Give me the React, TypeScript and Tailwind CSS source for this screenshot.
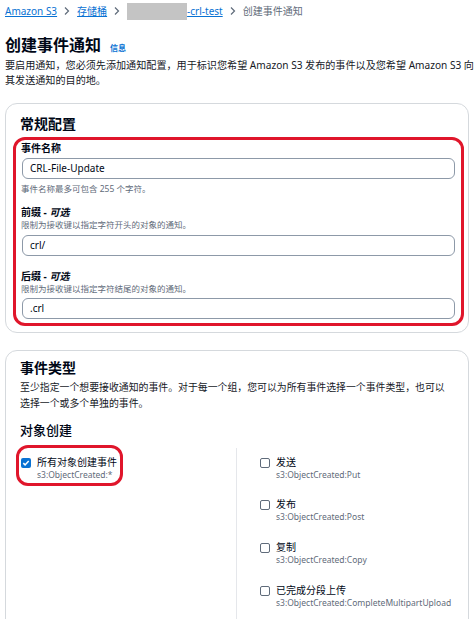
import React from "react";

const font = { fontFamily: '"Noto Sans", "Noto Sans CJK SC", sans-serif' };

function Chevron() {
  return (
    <svg width="8" height="10" viewBox="0 0 8 10" className="mx-[6px]">
      <path d="M2 1.5l3.5 3.5L2 8.5" fill="none" stroke="#5f6b7a" strokeWidth="1.2" />
    </svg>
  );
}

function Input({ value }: { value: string }) {
  return (
    <div className="ml-[3px] mr-[6px] h-[21px] rounded-[6px] border border-[#8d99a8] flex items-center pl-[7px] text-[10px] text-[#000716]">
      {value}
    </div>
  );
}

function Check({ label, code, checked }: { label: string; code: string; checked?: boolean }) {
  return (
    <div className="flex items-start gap-[6px]">
      {checked ? (
        <div className="mt-[2px] w-[10px] h-[10px] shrink-0 rounded-[2px] bg-[#0972d3] flex items-center justify-center">
          <svg width="8" height="8" viewBox="0 0 8 8">
            <path d="M1.3 4.1l1.8 1.8L6.7 2" fill="none" stroke="#fff" strokeWidth="1.5" />
          </svg>
        </div>
      ) : (
        <div className="mt-[2px] w-[10px] h-[10px] shrink-0 rounded-[2px] border border-[#5f6b7a] bg-white" />
      )}
      <div className="flex flex-col">
        <div className="text-[10px] text-[#000716] leading-[13px] whitespace-nowrap">{label}</div>
        <div className="text-[8.5px] text-[#5f6b7a] leading-[12px] whitespace-nowrap">{code}</div>
      </div>
    </div>
  );
}

export default function App() {
  return (
    <div style={font} className="w-[474px] h-[619px] overflow-hidden bg-white text-[#000716]">
      <div className="flex items-center h-[22px] pl-[5px] text-[10px]">
        <span className="text-[#0972d3] underline">Amazon S3</span>
        <Chevron />
        <span className="text-[#0972d3] underline">存储桶</span>
        <Chevron />
        <span className="inline-block w-[60px] h-[17px] bg-[#c4c4c4]" />
        <span className="text-[#0972d3] underline">-crl-test</span>
        <Chevron />
        <span className="text-[#5f6b7a]">创建事件通知</span>
      </div>
      <div className="flex items-baseline pl-[5px] mt-[12px] h-[22px]">
        <span className="text-[16px] font-bold leading-[22px]">创建事件通知</span>
        <span className="ml-[9px] text-[8px] font-bold text-[#0972d3]">信息</span>
      </div>
      <div className="px-[5px] mt-[1.5px] text-[10.1px] leading-[15px] text-[#16191f] whitespace-nowrap">
        <div>要启用通知，您必须先添加通知配置，用于标识您希望 Amazon S3 发布的事件以及您希望 Amazon S3 向</div>
        <div>其发送通知的目的地。</div>
      </div>

      <div className="mx-[5px] mt-[15px] border border-[#d5d9dd] rounded-[12px] pt-[10px] pb-[6px] pl-[7px] pr-[4px]">
        <div className="pl-[7px] text-[14px] font-bold leading-[20px]">常规配置</div>
        <div className="mt-[3px] border-[3px] border-[#e0162b] rounded-[12px] pl-[3px] pt-[1px] pb-[4px] flex flex-col">
          <div className="text-[10px] font-bold leading-[14px] pl-[2px]">事件名称</div>
          <div className="mt-[3px]">
            <Input value="CRL-File-Update" />
          </div>
          <div className="mt-[4px] text-[8.5px] leading-[12px] text-[#5f6b7a] pl-[2px]">事件名称最多可包含 255 个字符。</div>

          <div className="mt-[10px] text-[10px] font-bold leading-[14px] pl-[2px]">
            前缀 - <span className="italic">可选</span>
          </div>
          <div className="text-[8.5px] leading-[12px] text-[#5f6b7a] pl-[2px]">限制为接收键以指定字符开头的对象的通知。</div>
          <div className="mt-[4px]">
            <Input value="crl/" />
          </div>

          <div className="mt-[13px] text-[10px] font-bold leading-[14px] pl-[2px]">
            后缀 - <span className="italic">可选</span>
          </div>
          <div className="text-[8.5px] leading-[12px] text-[#5f6b7a] pl-[2px]">限制为接收键以指定字符结尾的对象的通知。</div>
          <div className="mt-[3px]">
            <Input value=".crl" />
          </div>
        </div>
      </div>

      <div className="mx-[5px] mt-[17px] border border-[#d5d9dd] rounded-[12px] pt-[7px] px-[14px] h-[300px]">
        <div className="text-[14px] font-bold leading-[20px]">事件类型</div>
        <div className="mt-[1px] text-[9.9px] leading-[16px] text-[#16191f] whitespace-nowrap">
          <div>至少指定一个想要接收通知的事件。对于每一个组，您可以为所有事件选择一个事件类型，也可以</div>
          <div>选择一个或多个单独的事件。</div>
        </div>
        <div className="mt-[10px] text-[13px] font-medium leading-[18px]">对象创建</div>
        <div className="mt-[6px] flex">
          <div className="w-[216px] shrink-0">
            <div className="-ml-[4px] w-[107px] border-[3px] border-[#e0162b] rounded-[12px] pl-[2px] pt-[8px] pb-[2px]">
              <Check label="所有对象创建事件" code="s3:ObjectCreated:*" checked />
            </div>
          </div>
          <div className="mt-[3px] border-l border-[#e5e7eb] pl-[23px] pt-[8px] flex flex-col gap-[17.7px] h-[200px]">
            <Check label="发送" code="s3:ObjectCreated:Put" />
            <Check label="发布" code="s3:ObjectCreated:Post" />
            <Check label="复制" code="s3:ObjectCreated:Copy" />
            <Check label="已完成分段上传" code="s3:ObjectCreated:CompleteMultipartUpload" />
          </div>
        </div>
      </div>
    </div>
  );
}
